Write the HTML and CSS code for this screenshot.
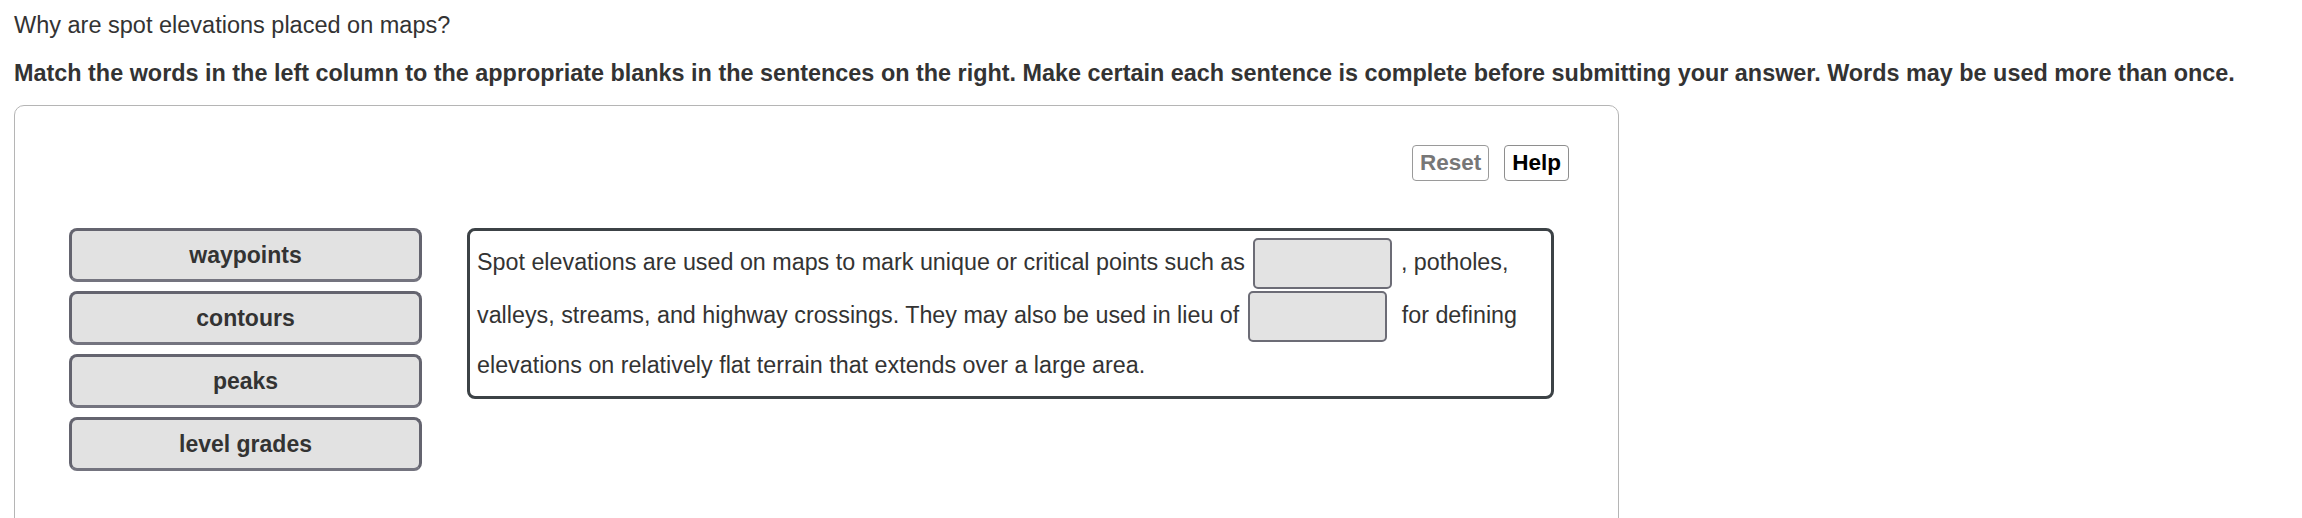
FILE: index.html
```html
<!DOCTYPE html>
<html lang="en">
<head>
<meta charset="utf-8">
<title>Spot elevations</title>
<link rel="stylesheet" href="styles.css">
</head>
<body>
<p class="question">Why are spot elevations placed on maps?</p>
<p class="instructions">Match the words in the left column to the appropriate blanks in the sentences on the right. Make certain each sentence is complete before submitting your answer. Words may be used more than once.</p>
<div class="card">
  <div class="toolbar">
    <button class="btn btn-reset" type="button">Reset</button>
    <button class="btn btn-help" type="button">Help</button>
  </div>
  <div class="workspace">
    <div class="word-bank">
      <div class="word">waypoints</div>
      <div class="word">contours</div>
      <div class="word">peaks</div>
      <div class="word">level grades</div>
    </div>
    <div class="sentence"><span class="seg">Spot elevations are used on maps to mark unique or critical points such as</span> <span class="blank"></span> <span class="seg">, potholes,</span> <span class="seg">valleys, streams, and highway crossings. They may also be used in lieu of</span> <span class="blank"></span> <span class="seg">&nbsp;for defining</span> <span class="seg">elevations on relatively flat terrain that extends over a large area.</span></div>
  </div>
</div>
</body>
</html>
```
FILE: styles.css
```css
html, body {
  background: #ffffff;
}
body {
  margin: 0;
  padding: 0 14px;
  font-family: "Liberation Sans", Arial, Helvetica, sans-serif;
  color: #333333;
  font-size: 23.5px;
}
.question {
  margin: 0;
  padding-top: 12px;
  line-height: 27px;
}
.instructions {
  margin: 21px 0 0;
  line-height: 27px;
  font-size: 23.4px;
  font-weight: bold;
  white-space: nowrap;
}
.card {
  margin-top: 18px;
  width: 1605px;
  height: 460px;
  box-sizing: border-box;
  border: 1px solid #b5b5b5;
  border-radius: 10px;
  padding: 39px 49px 0 54px;
}
.toolbar {
  display: flex;
  justify-content: flex-end;
  gap: 15px;
}
.btn {
  height: 36px;
  box-sizing: border-box;
  padding: 0 7px;
  border: 1px solid #8e8e8e;
  border-radius: 4px;
  background: #ffffff;
  font-family: "Liberation Sans", Arial, Helvetica, sans-serif;
  font-size: 22.5px;
  font-weight: bold;
  line-height: 34px;
}
.btn-reset {
  color: #777777;
  border-color: #9a9a9a;
}
.btn-help {
  color: #000000;
}
.workspace {
  display: flex;
  align-items: flex-start;
  gap: 45px;
  margin-top: 47px;
}
.word-bank {
  display: flex;
  flex-direction: column;
  gap: 9px;
  width: 353px;
}
.word {
  height: 54px;
  box-sizing: border-box;
  display: flex;
  align-items: center;
  justify-content: center;
  background: #e2e2e2;
  border: 3px solid #64646f;
  border-bottom-color: #74747f;
  border-radius: 8px;
  font-weight: bold;
  font-size: 23px;
  color: #333333;
}
.sentence {
  width: 1087px;
  box-sizing: border-box;
  border: 3px solid #3c4246;
  border-radius: 8px;
  padding: 6px 7px 9px 7px;
  font-size: 23.3px;
  line-height: 44px;
  color: #333333;
}
.blank {
  display: inline-block;
  width: 139px;
  height: 51px;
  box-sizing: border-box;
  margin: 1px 2px;
  vertical-align: middle;
  background: #e3e3e3;
  border: 2px solid #6c6c76;
  border-radius: 5px;
}
```
